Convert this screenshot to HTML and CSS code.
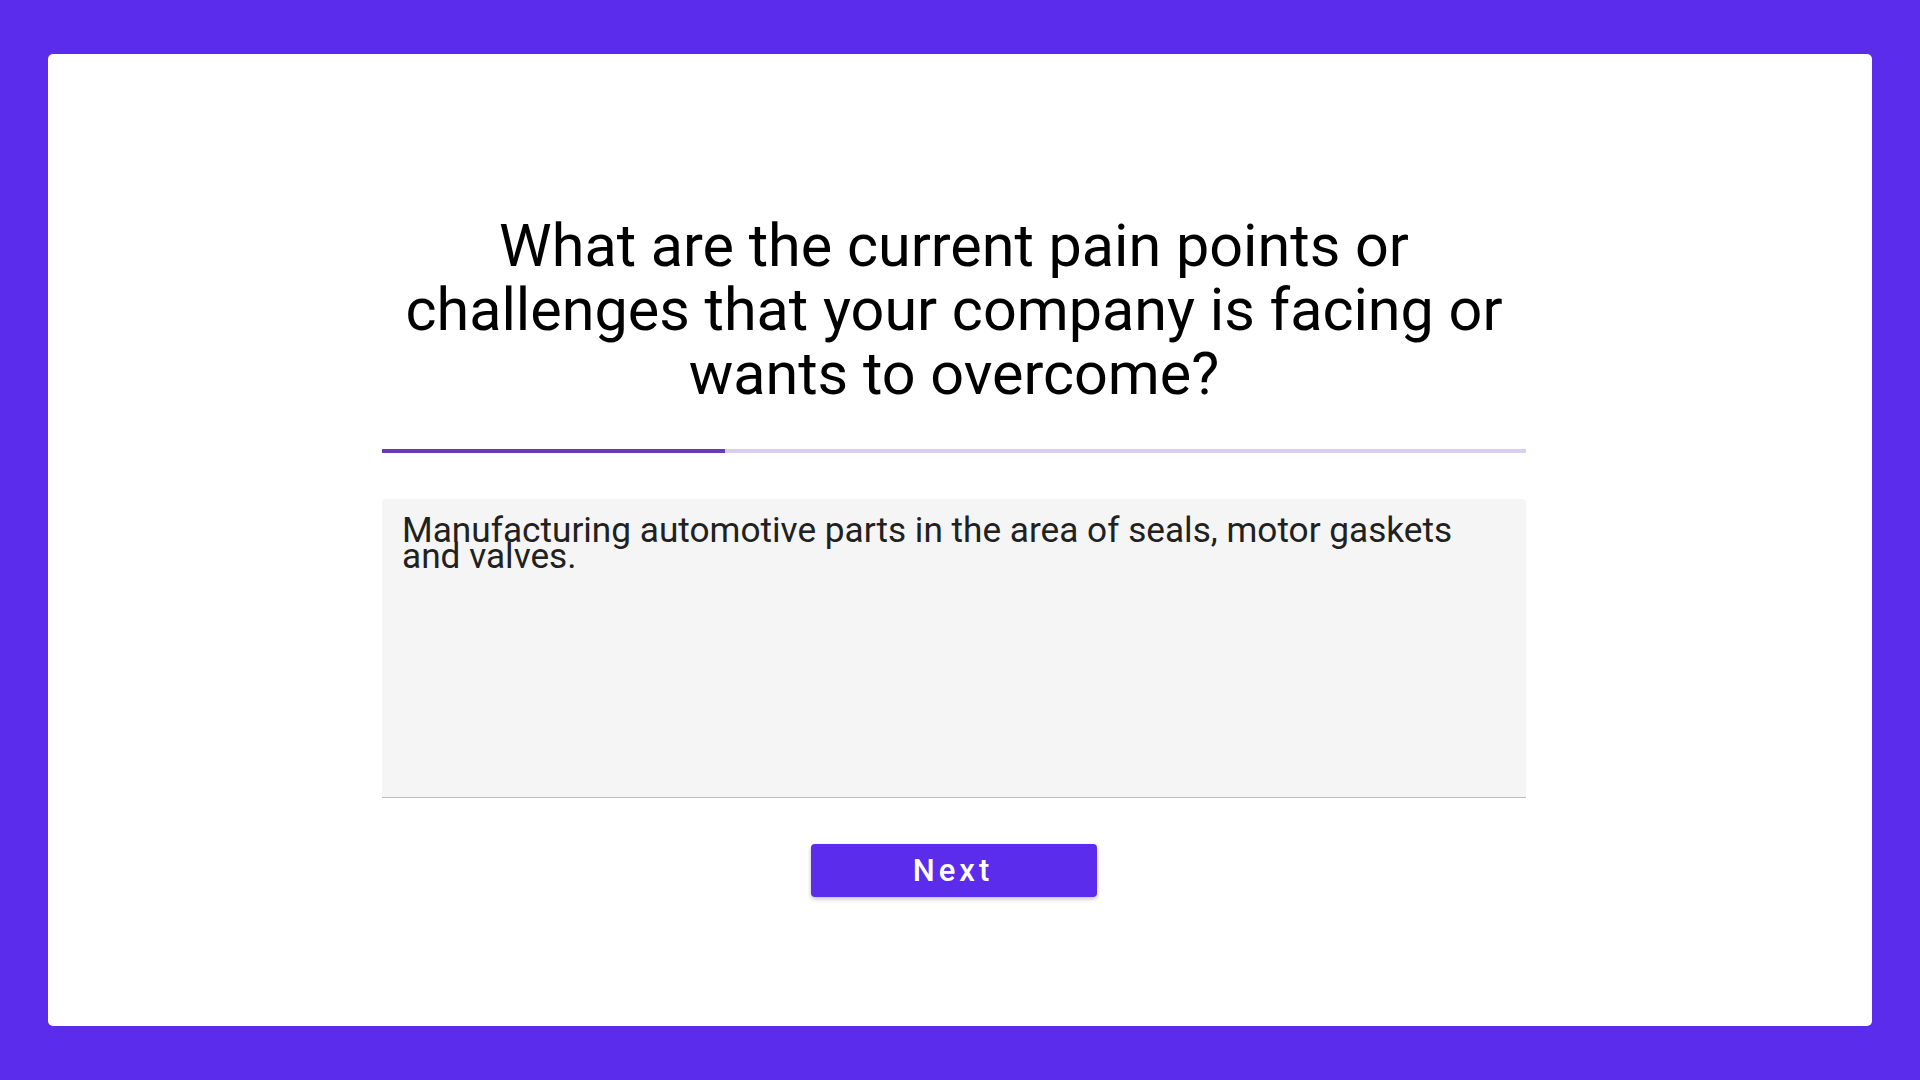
FILE: index.html
```html
<!DOCTYPE html>
<html lang="en">
<head>
<meta charset="utf-8">
<title>Question</title>
<link rel="stylesheet" href="styles.css">
</head>
<body>
<div class="page">
  <main class="card">
    <section class="content">
      <h1 class="question">What are the current pain points or<br>challenges that your company is facing or<br>wants to overcome?</h1>
      <div class="progress"><div class="progress-fill" style="width: 30%"></div></div>
      <div class="field">
        <div class="field-text">Manufacturing automotive parts in the area of seals, motor gaskets<br>and valves.</div>
      </div>
      <div class="actions">
        <button class="next-btn" type="button">Next</button>
      </div>
    </section>
  </main>
</div>
</body>
</html>
```
FILE: styles.css
```css
html, body {
  margin: 0;
  padding: 0;
  height: 100%;
}
body {
  background: #5b2ceb;
  font-family: Roboto, "Noto Sans", Arial, sans-serif;
}
.page {
  box-sizing: border-box;
  height: 100vh;
  padding: 54px 48px;
  display: flex;
}
.card {
  flex: 1;
  background: #ffffff;
  border-radius: 5px;
  display: flex;
  justify-content: flex-start;
  padding: 0 346px 0 334px;
}
.content {
  width: 1144px;
  display: flex;
  flex-direction: column;
  padding-top: 160px;
}
.question {
  margin: 0;
  font-weight: 400;
  font-size: 59.3px;
  line-height: 64px;
  color: #000;
  text-align: center;
}
.progress {
  margin-top: 43px;
  height: 4px;
  background: #d8cef0;
}
.progress-fill {
  height: 100%;
  background: #673ab7;
}
.field {
  margin-top: 46px;
  height: 299px;
  background: #f5f5f5;
  border-radius: 4px 4px 0 0;
  border-bottom: 1px solid #bdbdbd;
  padding: 18px 19px 0 20px;
  box-sizing: border-box;
}
.field-text {
  font-size: 35.2px;
  line-height: 26px;
  color: #212121;
}
.actions {
  display: flex;
  justify-content: center;
  margin-top: 46px;
}
.next-btn {
  width: 286px;
  height: 53px;
  border: none;
  border-radius: 4px;
  background: #5b2ceb;
  color: #fff;
  font-family: Roboto, "Noto Sans", Arial, sans-serif;
  font-weight: 500;
  font-size: 31px;
  letter-spacing: 4px;
  padding-left: 4px;
  box-shadow: 0 2px 4px rgba(0,0,0,0.25);
  cursor: pointer;
}
```
